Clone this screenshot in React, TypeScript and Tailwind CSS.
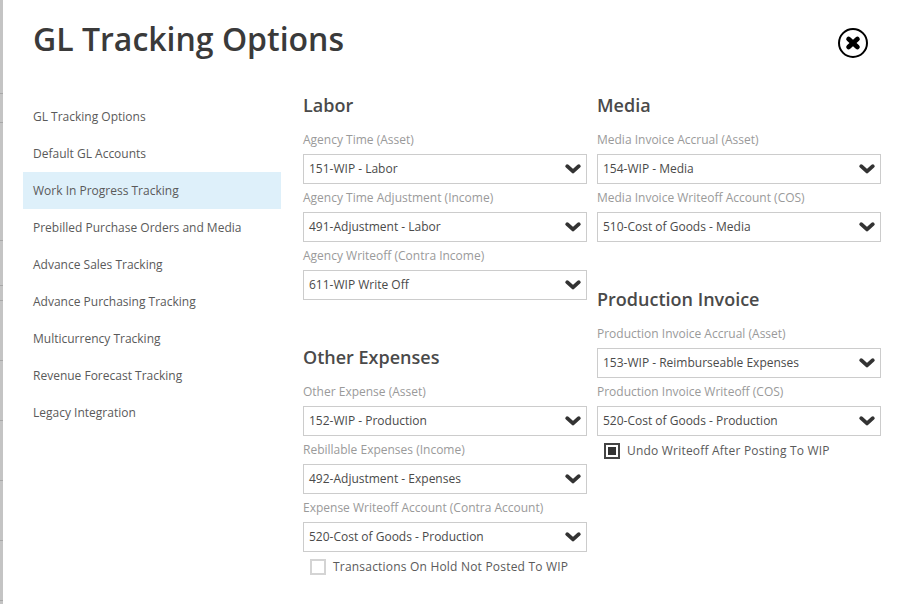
import React from 'react';

const menuItems = [
  'GL Tracking Options',
  'Default GL Accounts',
  'Work In Progress Tracking',
  'Prebilled Purchase Orders and Media',
  'Advance Sales Tracking',
  'Advance Purchasing Tracking',
  'Multicurrency Tracking',
  'Revenue Forecast Tracking',
  'Legacy Integration',
];

const backdropLines = [93, 122, 240, 285, 300, 360, 420, 480, 540, 600];

const Chevron: React.FC = () => (
  <svg width="18" height="12" viewBox="0 0 18 12" className="shrink-0">
    <path d="M3.2 3.2 L9 8.4 L14.8 3.2" fill="none" stroke="#333" strokeWidth="3.8" strokeLinecap="round" strokeLinejoin="round" />
  </svg>
);

const Field: React.FC<{ label: string; value: string }> = ({ label, value }) => (
  <div className="h-[58px]">
    <div className="h-[28px] pt-[4px] text-[12px] leading-[20px] text-[#9a9a9a]">{label}</div>
    <div className="h-[30px] border border-[#ccc] pl-[5px] pr-[4px] flex items-center justify-between text-[12px] text-[#4a4a4a]">
      <span>{value}</span>
      <Chevron />
    </div>
  </div>
);

const Heading: React.FC<{ text: string }> = ({ text }) => (
  <h2 className="h-[28px] text-[18px] leading-[14px] font-semibold text-[#4a4a4a]">{text}</h2>
);

const App: React.FC = () => {
  return (
    <div className="w-[900px] h-[604px] flex bg-white overflow-hidden font-['Open_Sans',sans-serif]">
      <div className="relative w-[3px] bg-[#c4c4c4] shrink-0">
        {backdropLines.map((y) => (
          <div key={y} className="absolute left-0 w-full h-px bg-[#a8a8a8]" style={{ top: y }} />
        ))}
      </div>
      <div className="flex-1 min-w-0">
        <header className="h-[98px] pl-[30px] pr-[32px] flex items-start justify-between">
          <h1 className="mt-[17px] text-[32px] leading-[44px] font-semibold text-[#3a3a3a]">GL Tracking Options</h1>
          <button className="mt-[28px] w-[30px] h-[30px] rounded-full border-2 border-black flex items-center justify-center">
            <svg width="16" height="16" viewBox="0 0 16 16">
              <path d="M3.6 4 L12.4 12 M12.4 4 L3.6 12" fill="none" stroke="#000" strokeWidth="4.8" strokeLinecap="round" />
            </svg>
          </button>
        </header>
        <div className="flex">
          <nav className="w-[258px] ml-[20px] shrink-0">
            {menuItems.map((item) => (
              <div
                key={item}
                className={`h-[37px] pl-[10px] flex items-center text-[12px] text-[#5a5a5a] ${item === 'Work In Progress Tracking' ? 'bg-[#def0fa]' : ''}`}
              >
                {item}
              </div>
            ))}
          </nav>
          <main className="ml-[22px] flex gap-[10px]">
            <section className="w-[284px]">
              <Heading text="Labor" />
              <Field label="Agency Time (Asset)" value="151-WIP - Labor" />
              <Field label="Agency Time Adjustment (Income)" value="491-Adjustment - Labor" />
              <Field label="Agency Writeoff (Contra Income)" value="611-WIP Write Off" />
              <div className="h-[50px]" />
              <Heading text="Other Expenses" />
              <Field label="Other Expense (Asset)" value="152-WIP - Production" />
              <Field label="Rebillable Expenses (Income)" value="492-Adjustment - Expenses" />
              <Field label="Expense Writeoff Account (Contra Account)" value="520-Cost of Goods - Production" />
              <div className="mt-[6px] ml-[7px] flex items-center gap-[7px] text-[12px] tracking-[0.2px] text-[#5a5a5a]">
                <span className="w-[16px] h-[16px] border-2 border-[#d4d4d4]" />
                Transactions On Hold Not Posted To WIP
              </div>
            </section>
            <section className="w-[284px]">
              <Heading text="Media" />
              <Field label="Media Invoice Accrual (Asset)" value="154-WIP - Media" />
              <Field label="Media Invoice Writeoff Account (COS)" value="510-Cost of Goods - Media" />
              <div className="h-[50px]" />
              <Heading text="Production Invoice" />
              <Field label="Production Invoice Accrual (Asset)" value="153-WIP - Reimburseable Expenses" />
              <Field label="Production Invoice Writeoff (COS)" value="520-Cost of Goods - Production" />
              <div className="mt-[6px] ml-[7px] flex items-center gap-[7px] text-[12px] tracking-[0.2px] text-[#5a5a5a]">
                <span className="w-[16px] h-[16px] border-2 border-[#444] flex items-center justify-center">
                  <span className="w-[8px] h-[8px] bg-[#333]" />
                </span>
                Undo Writeoff After Posting To WIP
              </div>
            </section>
          </main>
        </div>
      </div>
    </div>
  );
};

export default App;
